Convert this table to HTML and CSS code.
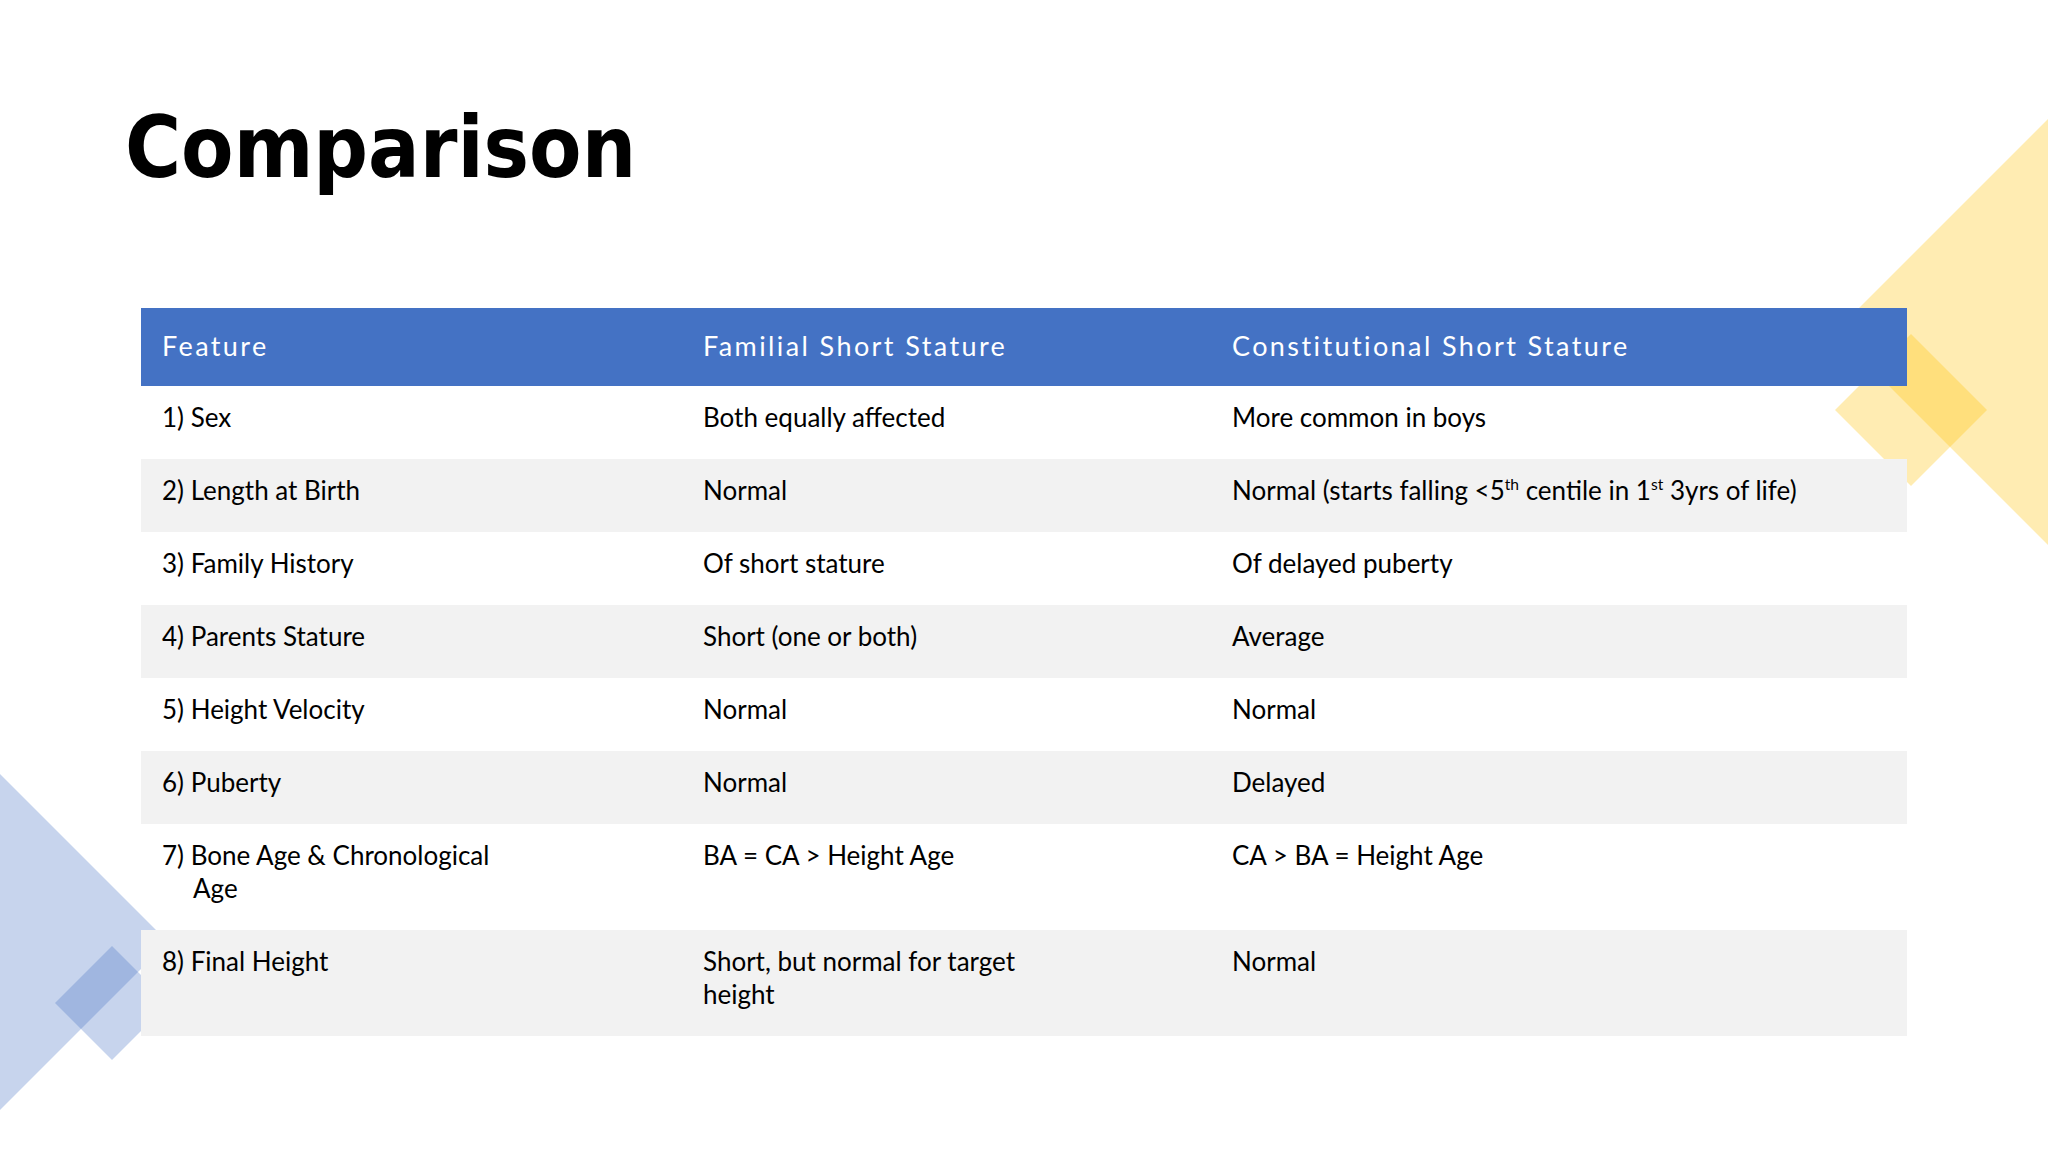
FILE: index.html
```html
<!DOCTYPE html>
<html lang="en">
<head>
<meta charset="utf-8">
<title>Comparison</title>
<link rel="stylesheet" href="styles.css">
</head>
<body>
<div class="slide">
  <svg class="decor" width="2048" height="1152" viewBox="0 0 2048 1152" aria-hidden="true">
    <polygon class="gold" points="1835,332 2048,119 2261,332 2048,545"/>
    <polygon class="gold" points="1835,410 1911,334 1987,410 1911,486"/>
    <polygon class="blue" points="-168,942 0,774 168,942 0,1110"/>
    <polygon class="blue" points="55,1003 112,946 169,1003 112,1060"/>
  </svg>
  <div class="content">
    <h1 class="title">Comparison</h1>
    <table class="cmp">
      <colgroup>
        <col class="c1">
        <col class="c2">
        <col class="c3">
      </colgroup>
      <thead>
        <tr>
          <th>Feature</th>
          <th>Familial Short Stature</th>
          <th>Constitutional Short Stature</th>
        </tr>
      </thead>
      <tbody>
        <tr>
          <td class="feat">1) Sex</td>
          <td>Both equally affected</td>
          <td>More common in boys</td>
        </tr>
        <tr class="band">
          <td class="feat">2) Length at Birth</td>
          <td>Normal</td>
          <td>Normal (starts falling &lt;5<sup>th</sup> centile in 1<sup>st</sup> 3yrs of life)</td>
        </tr>
        <tr>
          <td class="feat">3) Family History</td>
          <td>Of short stature</td>
          <td>Of delayed puberty</td>
        </tr>
        <tr class="band">
          <td class="feat">4) Parents Stature</td>
          <td>Short (one or both)</td>
          <td>Average</td>
        </tr>
        <tr>
          <td class="feat">5) Height Velocity</td>
          <td>Normal</td>
          <td>Normal</td>
        </tr>
        <tr class="band">
          <td class="feat">6) Puberty</td>
          <td>Normal</td>
          <td>Delayed</td>
        </tr>
        <tr>
          <td class="feat">7) Bone Age &amp; Chronological<br>Age</td>
          <td>BA = CA &gt; Height Age</td>
          <td>CA &gt; BA = Height Age</td>
        </tr>
        <tr class="band">
          <td class="feat">8) Final Height</td>
          <td>Short, but normal for target<br>height</td>
          <td>Normal</td>
        </tr>
      </tbody>
    </table>
  </div>
</div>
</body>
</html>
```

FILE: styles.css
```css
html, body {
  margin: 0;
  padding: 0;
  background: #ffffff;
}

.slide {
  position: relative;
  width: 2048px;
  height: 1152px;
  overflow: hidden;
  background: #ffffff;
}

.decor {
  position: absolute;
  left: 0;
  top: 0;
  z-index: 0;
}

.gold {
  fill: #FFC000;
  fill-opacity: 0.3;
}

.blue {
  fill: #4472C4;
  fill-opacity: 0.3;
}

.content {
  position: relative;
  z-index: 1;
  padding-top: 97px;
}

.title {
  margin: 0 0 0 125px;
  font-family: "DejaVu Sans", "Liberation Sans", sans-serif;
  font-stretch: condensed;
  font-weight: bold;
  font-size: 85px;
  line-height: 102px;
  color: #000000;
}

.cmp {
  margin: 109px 0 0 141px;
  width: 1766px;
  border-collapse: collapse;
  table-layout: fixed;
  font-family: Lato, "Open Sans", sans-serif;
  font-size: 26px;
  color: #000000;
}

.c1 { width: 541px; }
.c2 { width: 529px; }
.c3 { width: 696px; }

.cmp th {
  height: 78px;
  box-sizing: border-box;
  padding: 0 21px 4px 21px;
  background: #4472C4;
  color: #ffffff;
  font-weight: normal;
  font-size: 27px;
  text-align: left;
  vertical-align: middle;
  letter-spacing: 2.4px;
  line-height: 33px;
}

.cmp td {
  padding: 15px 21px 25px 21px;
  line-height: 33px;
  vertical-align: top;
  text-align: left;
}

.cmp td.feat {
  padding-left: 52px;
  text-indent: -31px;
}

.cmp tr.band td {
  background: #F2F2F2;
}

.cmp sup {
  font-size: 0.6em;
  line-height: 0;
  vertical-align: 0.65em;
}
```
